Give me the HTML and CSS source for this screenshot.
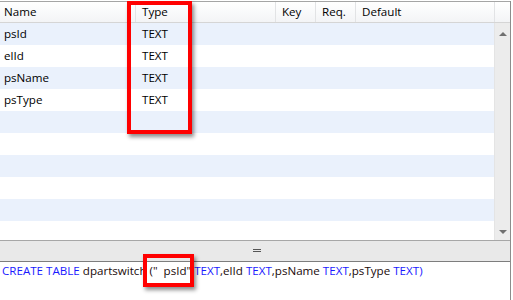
FILE: index.html
```html
<!DOCTYPE html>
<html lang="en">
<head>
    <meta charset="UTF-8">
    <title>Table Fields</title>
    <link rel="stylesheet" href="styles.css">
</head>
<body>
    <div class="editor">
        <div class="fields">
            <div class="grid-head">
                <div class="col col-name">Name</div>
                <div class="col col-type">Type</div>
                <div class="col col-key">Key</div>
                <div class="col col-req">Req.</div>
                <div class="col col-default">Default</div>
                <div class="col col-pad"></div>
            </div>
            <div class="grid-body">
                <div class="rows">
                    <div class="row"><span class="cell col-name">psId</span><span class="cell col-type">TEXT</span></div>
                    <div class="row"><span class="cell col-name">elId</span><span class="cell col-type">TEXT</span></div>
                    <div class="row"><span class="cell col-name">psName</span><span class="cell col-type">TEXT</span></div>
                    <div class="row"><span class="cell col-name">psType</span><span class="cell col-type">TEXT</span></div>
                    <div class="row"></div>
                    <div class="row"></div>
                    <div class="row"></div>
                    <div class="row"></div>
                    <div class="row"></div>
                    <div class="row"></div>
                </div>
                <div class="scrollbar">
                    <span class="arrow arrow-up"></span>
                    <span class="arrow arrow-down"></span>
                </div>
            </div>
        </div>

        <div class="splitter"><span class="grip"></span></div>

        <div class="sql">
            <span class="kw">CREATE TABLE</span> dpartswitch (" &nbsp;psId" <span class="kw">TEXT</span>,elId <span class="kw">TEXT</span>,psName <span class="kw">TEXT</span>,psType <span class="kw">TEXT</span><span class="kw">)</span>
        </div>

        <div class="callout callout-type"></div>
        <div class="callout callout-name"></div>
    </div>
</body>
</html>
```

FILE: styles.css
```css
body {
    margin: 0;
    background-color: white;
    font-family: 'Open Sans', 'Liberation Sans', sans-serif;
    font-size: 11.6px;
    color: #000;
}

.editor {
    position: relative;
    width: 510px;
    height: 300px;
    border-right: 1px solid #8c8c8c;
}

.fields {
    margin-top: 1px;
    border-top: 1px solid #a5a5a5;
}

.grid-head {
    display: flex;
    height: 20px;
    background: linear-gradient(#ffffff, #f3f4f6);
    border-bottom: 1px solid #d5d5d5;
}

.col {
    padding-left: 6px;
    line-height: 19px;
    border-right: 1px solid #e2e3e5;
    box-sizing: border-box;
}

.col-name { width: 136px; padding-left: 4px; }
.col-type { width: 140px; }
.col-key { width: 40px; }
.col-req { width: 40px; }
.col-default { width: 139px; }
.col-pad { width: 15px; border-right: none; }

.grid-body {
    display: flex;
    height: 217px;
    overflow: hidden;
}

.rows {
    width: 494px;
}

.row {
    display: flex;
    height: 22px;
    line-height: 22px;
}

.row:nth-child(odd) {
    background-color: #eaf1fc;
}

.cell {
    box-sizing: border-box;
    padding-left: 6px;
}

.row .col-name {
    padding-left: 4px;
}

.scrollbar {
    width: 16px;
    background-color: #ececec;
    border-left: 1px solid #e4e4e4;
    display: flex;
    flex-direction: column;
    justify-content: space-between;
    align-items: center;
    padding: 9px 0 6px;
    box-sizing: border-box;
}

.arrow {
    width: 0;
    height: 0;
    border-left: 4px solid transparent;
    border-right: 4px solid transparent;
}

.arrow-up {
    border-bottom: 4px solid #707070;
}

.arrow-down {
    border-top: 4px solid #707070;
}

.splitter {
    height: 20px;
    background-color: #e9e9e9;
    border-top: 1px solid #a7a7a7;
    border-bottom: 1px solid #7d7d7d;
    display: flex;
    justify-content: center;
    align-items: center;
}

.grip {
    width: 8px;
    height: 1px;
    margin-left: 4px;
    margin-top: -2px;
    border-top: 1px solid #555;
    border-bottom: 1px solid #555;
}

.sql {
    padding: 1px 0 0 2px;
    line-height: 16px;
    white-space: nowrap;
    color: #1a0a0a;
}

.kw {
    color: #1a1aff;
}

.callout {
    position: absolute;
    border: 4px solid #ff0000;
    box-sizing: border-box;
    box-shadow: 2px 3px 4px rgba(0, 0, 0, 0.45);
}

.callout-type {
    left: 127px;
    top: 0;
    width: 65px;
    height: 133px;
}

.callout-name {
    left: 143px;
    top: 253px;
    width: 51px;
    height: 33px;
}
```
